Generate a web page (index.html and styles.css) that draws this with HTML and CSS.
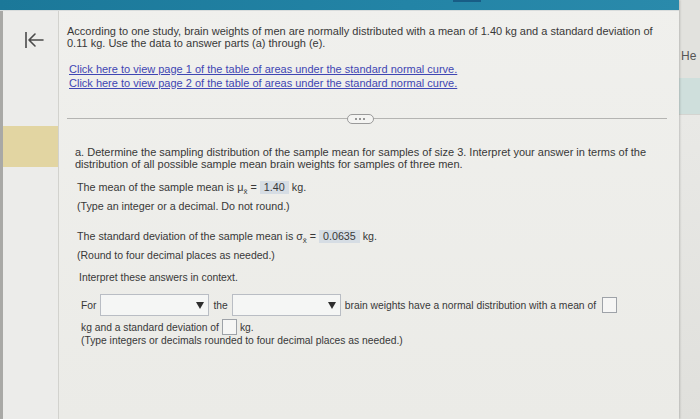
FILE: index.html
```html
<!DOCTYPE html>
<html>
<head>
<meta charset="utf-8">
<link rel="stylesheet" href="styles.css">
</head>
<body>
<div class="page">
  <div class="main">
    <div class="topbar"><span class="topbtn"></span></div>
    <div class="screen">
      <aside class="gutter">
        <svg class="back" width="20" height="18" viewBox="0 0 20 18">
          <path d="M2 1 V17" stroke="#4a4a4a" stroke-width="1.6" fill="none"/>
          <path d="M19 9 H5 M11 3 L5 9 L11 15" stroke="#4a4a4a" stroke-width="1.6" fill="none" stroke-linecap="round" stroke-linejoin="round"/>
        </svg>
        <div class="yellow"></div>
      </aside>
      <section class="content">
        <p class="intro">According to one study, brain weights of men are normally distributed with a mean of 1.40 kg and a standard deviation of 0.11 kg. Use the data to answer parts (a) through (e).</p>
        <div class="links">
          <a href="#">Click here to view page 1 of the table of areas under the standard normal curve.</a>
          <a href="#">Click here to view page 2 of the table of areas under the standard normal curve.</a>
        </div>
        <div class="divider"><span class="pill"><i></i><i></i><i></i></span></div>
        <div class="parta">
          <p class="q">a. Determine the sampling distribution of the sample mean for samples of size 3. Interpret your answer in terms of the distribution of all possible sample mean brain weights for samples of three men.</p>
          <p class="row r1">The mean of the sample mean is <span class="sym">μ<sub>x̄</sub></span> = <span class="ans">1.40</span> kg.</p>
          <p class="note n1">(Type an integer or a decimal. Do not round.)</p>
          <p class="row r2">The standard deviation of the sample mean is <span class="sym">σ<sub>x̄</sub></span> = <span class="ans">0.0635</span> kg.</p>
          <p class="note n2">(Round to four decimal places as needed.)</p>
          <p class="note n3">Interpret these answers in context.</p>
          <div class="fill">
            <span>For</span>
            <span class="select"><span class="tri"></span></span>
            <span>the</span>
            <span class="select"><span class="tri"></span></span>
            <span>brain weights have a normal distribution with a mean of</span>
            <span class="box"></span>
          </div>
          <div class="fill2">
            <span>kg and a standard deviation of</span>
            <span class="box"></span>
            <span>kg.</span>
          </div>
          <p class="note n4">(Type integers or decimals rounded to four decimal places as needed.)</p>
        </div>
      </section>
    </div>
  </div>
  <div class="side">
    <div class="help">He</div>
    <div class="band"></div>
    <div class="ghost"></div>
  </div>
</div>
</body>
</html>
```
FILE: styles.css
```css
html, body {
  margin: 0;
  padding: 0;
}
body {
  width: 700px;
  height: 419px;
  overflow: hidden;
  background: #e4e4e0;
  font-family: "Liberation Sans", Arial, sans-serif;
  color: #383838;
}
.page {
  display: grid;
  grid-template-columns: 679px 21px;
  height: 419px;
}
.main {
  display: flex;
  flex-direction: column;
  background: linear-gradient(180deg, #f0f0ed, #ebebe7);
  box-shadow: 1px 0 2px rgba(0,0,0,0.18);
  position: relative;
  z-index: 1;
}
.topbar {
  height: 10px;
  background: linear-gradient(90deg, #1b7899, #2384a6 60%, #2a8aab);
  border-bottom: 1px solid #d8dcdc;
  position: relative;
}
.topbtn {
  position: absolute;
  left: 453px;
  top: 0;
  width: 28px;
  height: 2px;
  background: #185d86;
}
.screen {
  flex: 1;
  display: grid;
  grid-template-columns: 59px 1fr;
}
.gutter {
  border-left: 3px solid #a9a9a6;
  border-right: 1px solid #d2d2ce;
  background: #ececea;
  display: flex;
  flex-direction: column;
}
.back {
  margin: 20px 0 0 21px;
}
.yellow {
  margin-top: 77px;
  height: 41px;
  background: #e2d5a2;
}
.content {
  padding: 14px 12px 0 8px;
  font-size: 11px;
}
p {
  margin: 0;
}
.intro {
  line-height: 12px;
}
.links {
  margin-top: 13px;
  display: flex;
  flex-direction: column;
  line-height: 14px;
  padding-left: 2px;
}
.links a {
  color: #3f46b3;
  text-decoration: underline;
}
.divider {
  margin-top: 28px;
  height: 1px;
  background: #b4b4b2;
  display: flex;
  justify-content: center;
}
.pill {
  margin-top: -4px;
  margin-left: -14px;
  width: 25px;
  height: 8px;
  border: 1px solid #9a9a9a;
  border-radius: 5px;
  background: #f4f4f2;
  display: flex;
  align-items: center;
  justify-content: center;
  gap: 2px;
}
.pill i {
  width: 2px;
  height: 2px;
  background: #777;
  border-radius: 1px;
}
.parta {
  padding-left: 8px;
  padding-right: 20px;
}
.q {
  margin-top: 27px;
  line-height: 12px;
}
.row {
  line-height: 14px;
  padding-left: 2px;
  font-size: 10.8px;
}
.r1 { margin-top: 10px; }
.r2 { margin-top: 17px; font-size: 10.7px; }
.note {
  line-height: 12px;
  padding-left: 2px;
}
.n1 { margin-top: 6px; font-size: 10.7px; }
.n2 { margin-top: 6px; font-size: 10.5px; }
.n3 { margin-top: 11px; padding-left: 4px; font-size: 10.4px; }
.sym sub {
  font-size: 8px;
  vertical-align: -3px;
  line-height: 0;
}
.ans {
  display: inline-block;
  background: #d6dde4;
  padding: 0 4px;
  line-height: 13px;
}
.fill {
  margin-top: 10px;
  padding-left: 6px;
  display: flex;
  align-items: center;
  gap: 4px;
  font-size: 10.3px;
}
.select {
  width: 107px;
  height: 20px;
  border: 1px solid #b9bdc4;
  background: #f5f6f5;
  display: flex;
  align-items: center;
  justify-content: flex-end;
}
.tri {
  width: 0;
  height: 0;
  border-left: 4px solid transparent;
  border-right: 4px solid transparent;
  border-top: 7px solid #2e2e2e;
  margin-right: 4px;
}
.box {
  display: inline-block;
  width: 13px;
  height: 14px;
  border: 1px solid #9ea2a8;
  background: #f6f6f5;
}
.fill .box {
  margin-left: 2px;
}
.fill2 {
  margin-top: 3px;
  padding-left: 6px;
  display: flex;
  align-items: center;
  gap: 3px;
  font-size: 10.3px;
}
.n4 { padding-left: 6px; margin-top: 0; font-size: 10.3px; }
.side {
  background: #e2e2de;
  display: flex;
  flex-direction: column;
}
.help {
  margin-top: 48px;
  padding-left: 2px;
  font-size: 12px;
  color: #555;
  line-height: 16px;
}
.band {
  margin-top: 14px;
  height: 36px;
  background: #cfdfdc;
}
.ghost {
  flex: 1;
  background: linear-gradient(180deg, #e9e9e6, #e0e0dc);
  border-top: 1px solid #d4d4d0;
}
```
